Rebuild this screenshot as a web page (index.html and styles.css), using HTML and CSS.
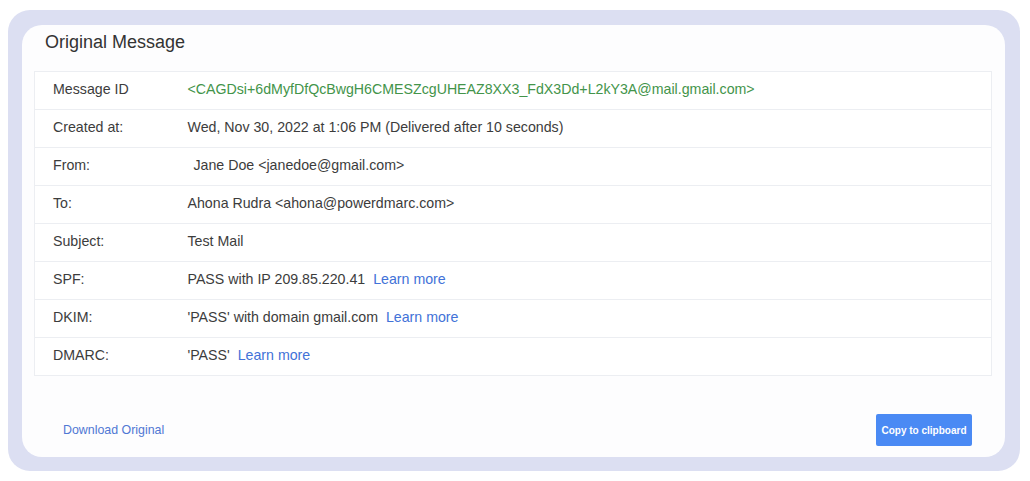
FILE: index.html
```html
<!DOCTYPE html>
<html lang="en">
<head>
    <meta charset="UTF-8">
    <meta name="viewport" content="width=device-width, initial-scale=1.0">
    <title>Original Message</title>
    <link rel="stylesheet" href="styles.css">
</head>
<body>
    <div class="frame">
        <div class="card">
            <h1 class="title">Original Message</h1>

            <table class="details">
                <tr>
                    <td class="label">Message ID</td>
                    <td class="value msg-id">&lt;CAGDsi+6dMyfDfQcBwgH6CMESZcgUHEAZ8XX3_FdX3Dd+L2kY3A@mail.gmail.com&gt;</td>
                </tr>
                <tr>
                    <td class="label">Created at:</td>
                    <td class="value">Wed, Nov 30, 2022 at 1:06 PM (Delivered after 10 seconds)</td>
                </tr>
                <tr>
                    <td class="label">From:</td>
                    <td class="value"><span class="indent">Jane Doe &lt;janedoe@gmail.com&gt;</span></td>
                </tr>
                <tr>
                    <td class="label">To:</td>
                    <td class="value">Ahona Rudra &lt;ahona@powerdmarc.com&gt;</td>
                </tr>
                <tr>
                    <td class="label">Subject:</td>
                    <td class="value">Test Mail</td>
                </tr>
                <tr>
                    <td class="label">SPF:</td>
                    <td class="value">PASS with IP 209.85.220.41 <a href="#" class="learn">Learn more</a></td>
                </tr>
                <tr>
                    <td class="label">DKIM:</td>
                    <td class="value">'PASS' with domain gmail.com <a href="#" class="learn">Learn more</a></td>
                </tr>
                <tr>
                    <td class="label">DMARC:</td>
                    <td class="value">'PASS' <a href="#" class="learn">Learn more</a></td>
                </tr>
            </table>

            <div class="footer">
                <a href="#" class="download">Download Original</a>
                <button class="copy-btn">Copy to clipboard</button>
            </div>
        </div>
    </div>
</body>
</html>
```

FILE: styles.css
```css
* {
    box-sizing: border-box;
    margin: 0;
    padding: 0;
    font-family: 'Liberation Sans', Arial, sans-serif;
}

body {
    background-color: #ffffff;
    padding: 10px 10px 10px 8px;
}

.frame {
    width: 1012px;
    height: 461px;
    background-color: #dcdff2;
    border-radius: 22px;
    padding: 15px 15px 14px 14px;
}

.card {
    background-color: #fdfdfe;
    border-radius: 20px;
    height: 100%;
    padding: 0 13px 0 12px;
}

.title {
    font-size: 18px;
    font-weight: normal;
    color: #333;
    line-height: 18px;
    padding: 8px 0 0 11px;
    margin-bottom: 20px;
}

.details {
    width: 100%;
    border-collapse: collapse;
    background-color: #fff;
    font-size: 14.2px;
    color: #3c3c3c;
}

.details td {
    height: 38px;
    padding-bottom: 3px;
    border-top: 1px solid #eceef2;
    border-bottom: 1px solid #eceef2;
    vertical-align: middle;
}

.details tr td:first-child {
    border-left: 1px solid #eceef2;
}

.details tr td:last-child {
    border-right: 1px solid #eceef2;
}

.label {
    width: 153px;
    padding-left: 18px;
}

.msg-id {
    color: #43944a;
}

.indent {
    padding-left: 6px;
}

.learn {
    color: #4272d8;
    text-decoration: none;
    margin-left: 4px;
}

.footer {
    display: flex;
    justify-content: space-between;
    align-items: center;
    padding: 38px 20px 0 29px;
}

.download {
    color: #5078d4;
    font-size: 12.4px;
    text-decoration: none;
}

.copy-btn {
    background-color: #4a8af4;
    border: none;
    border-radius: 2px;
    color: #fff;
    font-size: 10px;
    font-weight: bold;
    width: 96px;
    height: 32px;
}
```
